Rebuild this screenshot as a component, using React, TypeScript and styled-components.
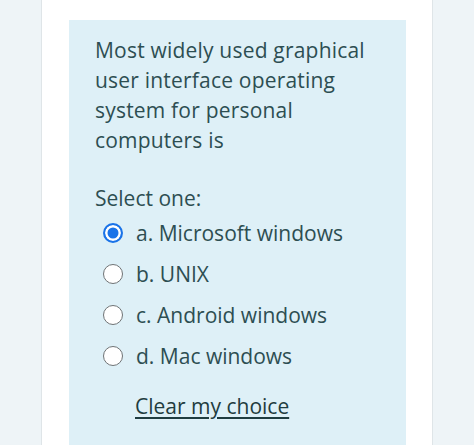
import styled, {createGlobalStyle} from "styled-components";
import {useState} from "react";

const options = [
    {key: 'a', label: 'Microsoft windows'},
    {key: 'b', label: 'UNIX'},
    {key: 'c', label: 'Android windows'},
    {key: 'd', label: 'Mac windows'},
];

function App() {
    const [choice, setChoice] = useState<string | null>('a');

    return (
        <>
            <GlobalStyle/>
            <Page>
                <Side/>
                <Panel>
                    <QuestionBox>
                        <Question>Most widely used graphical user interface operating system for personal computers is</Question>
                        <Prompt>Select one:</Prompt>
                        <OptionList>
                            {options.map(o => (
                                <Option key={o.key} onClick={() => setChoice(o.key)}>
                                    <Radio $checked={choice === o.key}/>
                                    <span>{o.key}. {o.label}</span>
                                </Option>
                            ))}
                        </OptionList>
                        <ClearLink href="#" onClick={e => { e.preventDefault(); setChoice(null); }}>Clear my choice</ClearLink>
                    </QuestionBox>
                </Panel>
                <Side/>
            </Page>
        </>
    )
}

const GlobalStyle = createGlobalStyle`
  html, body {
    margin: 0;
    padding: 0;
    height: 100%;
    overflow: hidden;
  }
  #root {
    height: 100%;
  }
`;

const Page = styled.div`
  height: 445px;
  display: grid;
  grid-template-columns: 42px 1fr 42px;
  background: #ffffff;
  font-family: "Open Sans", sans-serif;
`;

const Side = styled.div`
  background: #eef4f7;
  &:first-child {
    border-right: 1px solid #dfe5e8;
  }
  &:last-child {
    border-left: 1px solid #dfe5e8;
  }
`;

const Panel = styled.div`
  padding: 20px 26px 0 27px;
  overflow: hidden;
`;

const QuestionBox = styled.div`
  background: #def0f7;
  height: 100%;
  padding: 15px 20px 0 26px;
  box-sizing: border-box;
  color: #2d4e52;
`;

const Question = styled.p`
  margin: 0;
  font-size: 21px;
  line-height: 30px;
  letter-spacing: 0.2px;
`;

const Prompt = styled.div`
  margin-top: 28px;
  font-size: 21px;
  line-height: 30px;
`;

const OptionList = styled.div`
  display: flex;
  flex-direction: column;
  gap: 11px;
  margin-top: 5px;
  padding-left: 8px;
`;

const Option = styled.label`
  display: flex;
  align-items: center;
  gap: 13px;
  font-size: 21px;
  line-height: 30px;
  cursor: pointer;
`;

const Radio = styled.span<{$checked: boolean}>`
  width: 20px;
  height: 20px;
  box-sizing: border-box;
  border-radius: 50%;
  flex: 0 0 auto;
  border: ${props => props.$checked ? '2px solid #1a73e8' : '1.5px solid #6f7375'};
  box-shadow: ${props => props.$checked ? 'inset 0 0 0 2.5px #ffffff' : 'none'};
  background-color: ${props => props.$checked ? '#1a73e8' : '#ffffff'};
`;

const ClearLink = styled.a`
  display: inline-block;
  margin-top: 21px;
  margin-left: 40px;
  font-size: 21px;
  color: #1f3c40;
  text-decoration: underline;
  text-underline-offset: 3px;
`;

export default App;
